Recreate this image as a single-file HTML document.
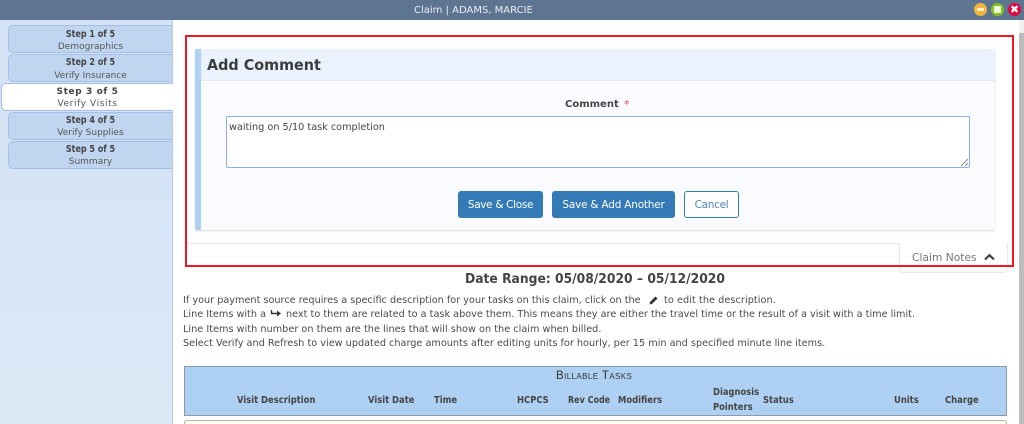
<!DOCTYPE html>
<html><head><meta charset="utf-8"><style>
html,body{margin:0;padding:0;width:1024px;height:424px;overflow:hidden;background:#fff}
body{font-family:"DejaVu Sans","Liberation Sans",sans-serif;color:#444;position:relative;filter:blur(.25px)}
div,span.a{position:absolute;box-sizing:border-box}
.t{white-space:nowrap;line-height:14px}
.tab{left:8px;width:164px;height:28px;background:#c0d6f0;border:1px solid #a3bfe6;border-right:0;border-radius:5px 0 0 5px;text-align:center;color:#555;font-size:9px;line-height:12px;padding-top:3px}
.tab b{display:block;color:#444;font-size:9.6px;transform:scaleX(.835)}
.btn{top:191px;height:27px;background:#337ab7;color:#fff;border-radius:3px;text-align:center;font-size:10.5px;line-height:28px}
.l{left:183px;font-size:9.7px;color:#4a4a4a}
.h{font-size:10px;font-weight:bold;color:#444;transform:scaleX(.84);transform-origin:0 0}
</style></head><body>
<div style="left:0;top:0;width:1024px;height:20px;background:#5d7590"></div>
<div class="t" style="left:414px;top:3px;color:#e8eef4;font-size:10px;line-height:15px">Claim | ADAMS, MARCIE</div>
<div style="left:974px;top:3px;width:13px;height:13px;border-radius:50%;background:#f2b53c"></div>
<div style="left:977px;top:8px;width:7px;height:3px;background:#fbeecb"></div>
<div style="left:991px;top:3px;width:13px;height:13px;border-radius:50%;background:#86c21f"></div>
<div style="left:994px;top:6px;width:7px;height:7px;background:#eef7dc"></div>
<div style="left:1008px;top:3px;width:13px;height:13px;border-radius:50%;background:#e0073c"></div>
<div class="t" style="left:1008px;top:3px;width:13px;height:13px;line-height:13px;text-align:center;color:#fff;font-size:11px;font-weight:bold">✖</div>

<div style="left:0;top:20px;width:172px;height:404px;background:linear-gradient(#d3e3f5,#dbe8f6)"></div>
<div style="left:172px;top:20px;width:1px;height:404px;background:#b9cde3"></div>

<div class="tab" style="top:25px"><b>Step 1 of 5</b>Demographics</div>
<div class="tab" style="top:54px;padding-top:2px"><b style="margin-bottom:1px">Step 2 of 5</b>Verify Insurance</div>
<div class="tab" style="top:83px;left:1px;width:172px;background:#fff;letter-spacing:.6px;padding-top:2px"><b style="transform:none;font-size:9px">Step 3 of 5</b>Verify Visits</div>
<div class="tab" style="top:112px;padding-top:2px"><b>Step 4 of 5</b>Verify Supplies</div>
<div class="tab" style="top:141px;padding-top:2px"><b>Step 5 of 5</b>Summary</div>

<div style="left:1019px;top:20px;width:5px;height:404px;background:#f1f1f1"></div>
<div style="left:1019px;top:33px;width:5px;height:391px;background:#bdbdbd"></div>

<div style="left:195px;top:49px;width:800px;height:181px;background:#f9fbff;box-shadow:0 1px 2px rgba(0,0,0,.15)"></div>
<div style="left:195px;top:49px;width:6px;height:181px;background:#aed0f3;border-radius:2px 0 0 2px"></div>
<div style="left:201px;top:49px;width:794px;height:32px;background:#eaf3fd;border-bottom:1px dotted #e0e4e8"></div>
<div class="t" style="left:207px;top:56px;font-size:15.5px;font-weight:bold;color:#3c3c3c;line-height:18px;transform:scaleX(.927);transform-origin:0 0">Add Comment</div>
<div class="t" style="left:565px;top:98px;font-size:10px;font-weight:bold;color:#444">Comment</div>
<div class="t" style="left:624px;top:98px;font-size:11px;color:#e04a4a">*</div>
<div style="left:226px;top:116px;width:744px;height:52px;background:#fff;border:1.5px solid #8aaee6;border-radius:2px"></div>
<div class="t" style="left:229px;top:121px;font-size:9.7px;color:#444">waiting on 5/10 task completion</div>
<svg style="position:absolute;left:960px;top:158px" width="9" height="9"><path d="M1 8L8 1M5 8L8 5" stroke="#888" stroke-width="1"/></svg>

<div class="btn" style="left:458px;width:85px;letter-spacing:-.33px">Save &amp; Close</div>
<div class="btn" style="left:552px;width:123px;letter-spacing:-.22px">Save &amp; Add Another</div>
<div class="btn" style="left:684px;width:55px;background:#fff;color:#4f86bd;border:1px solid #337ab7;line-height:26px;letter-spacing:-.3px">Cancel</div>

<div style="left:185px;top:243px;width:823px;height:1px;background:#e8e8e8"></div>
<div style="left:899px;top:243px;width:109px;height:30px;background:#fff;border:1px solid #e8e8e8;border-top:0;border-radius:0 0 4px 4px"></div>
<div class="t" style="left:912px;top:251px;font-size:10.7px;color:#777">Claim Notes</div>
<svg style="position:absolute;left:984px;top:253px" width="11" height="8"><path d="M1 6.5L5.5 2.2L10 6.5" fill="none" stroke="#444" stroke-width="2.2"/></svg>

<div style="left:185px;top:35px;width:829px;height:232px;border:2px solid #f5141f"></div>

<div class="t" style="left:465px;top:271px;font-size:13.7px;font-weight:bold;color:#444;line-height:16px;transform:scaleX(.9);transform-origin:0 0">Date Range: 05/08/2020 – 05/12/2020</div>

<div class="t l" style="top:294px">If your payment source requires a specific description for your tasks on this claim, click on the</div>
<svg style="position:absolute;left:648px;top:295px" width="11" height="11"><path d="M1.5 9.5L2.2 6.8L7.5 1.5L9.5 3.5L4.2 8.8Z" fill="#333"/></svg>
<div class="t l" style="left:664px;top:294px;letter-spacing:.06px">to edit the description.</div>
<div class="t l" style="top:308px">Line Items with a</div>
<svg style="position:absolute;left:270px;top:308px" width="12" height="10"><path d="M1.5 2V5.5H7" fill="none" stroke="#333" stroke-width="1.4"/><path d="M7 2.5L11 5.5L7 8.5Z" fill="#333"/></svg>
<div class="t l" style="left:286px;top:308px">next to them are related to a task above them. This means they are either the travel time or the result of a visit with a time limit.</div>
<div class="t l" style="top:323px;letter-spacing:.02px">Line Items with number on them are the lines that will show on the claim when billed.</div>
<div class="t l" style="top:337px">Select Verify and Refresh to view updated charge amounts after editing units for hourly, per 15 min and specified minute line items.</div>

<div style="left:184px;top:366px;width:823px;height:50px;background:#aed0f3;border:1px solid #8a9bad"></div>
<div class="t" style="left:556px;top:369px;font-family:'Liberation Sans',sans-serif;font-size:11.5px;font-variant:small-caps;color:#333;letter-spacing:.4px">Billable Tasks</div>
<div class="t h" style="left:237px;top:394px">Visit Description</div>
<div class="t h" style="left:368px;top:394px">Visit Date</div>
<div class="t h" style="left:434px;top:394px">Time</div>
<div class="t h" style="left:517px;top:394px">HCPCS</div>
<div class="t h" style="left:568px;top:394px;transform:scaleX(.8)">Rev Code</div>
<div class="t h" style="left:618px;top:394px">Modifiers</div>
<div class="t h" style="left:713px;top:386px">Diagnosis</div>
<div class="t h" style="left:713px;top:401px">Pointers</div>
<div class="t h" style="left:763px;top:394px">Status</div>
<div class="t h" style="left:894px;top:394px">Units</div>
<div class="t h" style="left:945px;top:394px">Charge</div>
<div style="left:184px;top:420px;width:823px;height:8px;background:#fffdf6;border:1px solid #bbb3a0;border-radius:3px"></div>
</body></html>
